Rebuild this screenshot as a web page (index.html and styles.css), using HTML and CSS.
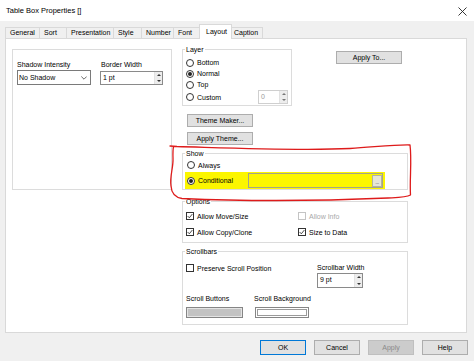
FILE: index.html
```html
<!DOCTYPE html>
<html>
<head>
<meta charset="utf-8">
<link rel="stylesheet" href="styles.css">
</head>
<body>
<div class="titlebar">
  <span class="title">Table Box Properties []</span>
  <svg class="close" width="9" height="9" viewBox="0 0 9 9"><path d="M0.5 0.5 L8.5 8.5 M8.5 0.5 L0.5 8.5" stroke="#222" stroke-width="0.9" fill="none"/></svg>
</div>
<div class="tabstrip">
  <div class="tab t-general">General</div>
  <div class="tab t-sort">Sort</div>
  <div class="tab t-pres">Presentation</div>
  <div class="tab t-style">Style</div>
  <div class="tab t-number">Number</div>
  <div class="tab t-font">Font</div>
  <div class="tab sel">Layout</div>
  <div class="tab t-caption">Caption</div>
</div>
<div class="panel">
  <div class="group shadow-group">
    <div class="shadow-grid">
      <div class="col1">
        <div class="lbl">Shadow Intensity</div>
        <div class="combo"><span>No Shadow</span><svg width="6" height="4" viewBox="0 0 6 4"><path d="M0.3 0.5 L3 3.2 L5.7 0.5" stroke="#444" stroke-width="0.8" fill="none"/></svg></div>
      </div>
      <div class="col2">
        <div class="lbl pad1">Border Width</div>
        <div class="spin spin-border"><span class="spin-val">1 pt</span><div class="spin-btns"><span class="up"></span><span class="dn"></span></div></div>
      </div>
    </div>
  </div>
  <div class="rightcol">
    <div class="row-layer">
      <div class="group layer-group">
        <div class="gtitle">Layer</div>
        <div class="radios">
          <div class="radio-row"><span class="radio"></span>Bottom</div>
          <div class="radio-row"><span class="radio on"></span>Normal</div>
          <div class="radio-row"><span class="radio"></span>Top</div>
          <div class="radio-row custom-row"><span class="rlab"><span class="radio"></span>Custom</span><div class="spin spin-custom disabled"><span class="spin-val">0</span><div class="spin-btns"><span class="up"></span><span class="dn"></span></div></div></div>
        </div>
      </div>
      <div class="btn apply-to">Apply To...</div>
    </div>
    <div class="btn theme-btn">Theme Maker...</div>
    <div class="btn theme-btn theme-btn2">Apply Theme...</div>
    <div class="group wide show-group">
      <div class="gtitle">Show</div>
      <div class="radio-row always-row"><span class="radio"></span>Always</div>
      <div class="cond-row">
        <span class="rlab"><span class="radio on"></span>Conditional</span>
        <div class="cond-field"><span class="ellipsis">...</span></div>
      </div>
    </div>
    <div class="group wide opt-group">
      <div class="gtitle">Options</div>
      <div class="opt-grid">
        <div class="check-row"><span class="check on"><svg width="6" height="6" viewBox="0 0 6 6"><path d="M0.6 3 L2.3 4.8 L5.4 1" stroke="#222" stroke-width="0.8" fill="none"/></svg></span>Allow Move/Size</div>
        <div class="check-row disabled"><span class="check"></span>Allow Info</div>
        <div class="check-row"><span class="check on"><svg width="6" height="6" viewBox="0 0 6 6"><path d="M0.6 3 L2.3 4.8 L5.4 1" stroke="#222" stroke-width="0.8" fill="none"/></svg></span>Allow Copy/Clone</div>
        <div class="check-row"><span class="check on"><svg width="6" height="6" viewBox="0 0 6 6"><path d="M0.6 3 L2.3 4.8 L5.4 1" stroke="#222" stroke-width="0.8" fill="none"/></svg></span>Size to Data</div>
      </div>
    </div>
    <div class="group wide sb-group">
      <div class="gtitle">Scrollbars</div>
      <div class="sb-top">
        <div class="check-row"><span class="check"></span>Preserve Scroll Position</div>
        <div>
          <div class="lbl">Scrollbar Width</div>
          <div class="spin spin-sb"><span class="spin-val">9 pt</span><div class="spin-btns"><span class="up"></span><span class="dn"></span></div></div>
        </div>
      </div>
      <div class="sb-bottom">
        <div>
          <div class="lbl">Scroll Buttons</div>
          <div class="swatch swatch-btn"></div>
        </div>
        <div>
          <div class="lbl">Scroll Background</div>
          <div class="swatch swatch-bg"></div>
        </div>
      </div>
    </div>
  </div>
</div>
<div class="btnbar">
  <div class="btn dlg-btn ok">OK</div>
  <div class="btn dlg-btn">Cancel</div>
  <div class="btn dlg-btn disabled-btn">Apply</div>
  <div class="btn dlg-btn">Help</div>
</div>
<svg class="annot" width="474" height="361" viewBox="0 0 474 361">
  <path d="M170 146 L177 146.5 C230 148 300 151 350 148.5 C380 146.5 398 144.5 410 145 C412 160 409.5 180 410.5 195 C406 197.5 398 197.5 388 198 C330 200.5 250 201.5 182 198.5 C176 197.5 171.5 194 171 186 C169.5 176 173.5 168 173 158 C172.8 152 173 149 173.5 146.5" stroke="#de1b1b" stroke-width="1.3" fill="none" stroke-linecap="round" stroke-linejoin="round"/>
</svg>
</body>
</html>
```
FILE: styles.css
```css
* { box-sizing: border-box; }
html, body { margin: 0; padding: 0; }
body {
  width: 474px;
  height: 361px;
  overflow: hidden;
  background: #f0f0f0;
  font-family: "Liberation Sans", Arial, sans-serif;
  font-size: 7px;
  color: #000;
  position: relative;
}
.titlebar {
  height: 21px;
  background: #fff;
  display: flex;
  align-items: center;
  justify-content: space-between;
  padding: 0 7px 0 6px;
}
.title { font-size: 7.5px; line-height: 9px; }
.close { display: block; margin-top: 1px; }

.tabstrip {
  height: 17px;
  display: flex;
  align-items: flex-end;
  padding-left: 5px;
}
.tab {
  height: 11px;
  border: 1px solid #d9d9d9;
  border-bottom: none;
  background: #f0f0f0;
  padding-left: 4px;
  line-height: 10px;
  margin-right: -1px;
  white-space: nowrap;
}
.t-general { width: 35px; }
.t-sort { width: 28px; }
.t-pres { width: 48px; }
.t-style { width: 29px; }
.t-number { width: 33px; }
.t-font { width: 29px; }
.t-caption { width: 34px; }
.tab.sel {
  width: 33px;
  height: 15px;
  background: #fff;
  margin-left: -2px;
  margin-right: -3px;
  margin-bottom: -1px;
  padding-left: 6px;
  line-height: 13px;
  position: relative;
  z-index: 1;
}

.panel {
  margin-left: 5px;
  width: 462px;
  height: 295px;
  background: #fff;
  border: 1px solid #d9d9d9;
  display: flex;
  align-items: flex-start;
  padding: 10px 0 0 6px;
}
.group { border: 1px solid #dcdcdc; background: #fff; }
.gtitle {
  margin: -5px 0 0 -1px;
  padding: 0 1px;
  background: #fff;
  line-height: 9px;
  height: 9px;
  width: max-content;
}
.lbl { line-height: 9px; height: 9px; white-space: nowrap; }
.pad1 { padding-left: 1px; }

.shadow-group { width: 160px; height: 141px; padding: 10px 0 0 4px; }
.shadow-grid { display: flex; }
.col1 { width: 83px; }
.combo {
  margin-top: 1px;
  width: 74px;
  height: 15px;
  border: 1px solid #7a7a7a;
  display: flex;
  align-items: center;
  justify-content: space-between;
  padding: 0 3px 0 1px;
  line-height: 9px;
}
.combo svg { display: block; margin-top: 1px; }

.spin {
  border: 1px solid #8a8a8a;
  display: flex;
  justify-content: space-between;
  background: #fff;
}
.spin-val { padding: 1px 0 0 2px; line-height: 9px; }
.spin-btns {
  width: 8px;
  background: #ededed;
  border-left: 1px solid #e2e2e2;
  display: flex;
  flex-direction: column;
  align-items: center;
  justify-content: space-around;
}
.up, .dn {
  width: 0;
  height: 0;
  border-left: 2px solid transparent;
  border-right: 2px solid transparent;
}
.up { border-bottom: 2px solid #333; }
.dn { border-top: 2px solid #333; }
.spin-border { width: 63px; height: 14px; margin-top: 2px; }
.spin-custom { width: 30px; height: 14px; }
.spin.disabled { border-color: #cfcfcf; color: #9a9a9a; }
.spin.disabled .up { border-bottom-color: #777; }
.spin.disabled .dn { border-top-color: #777; }
.spin-sb { width: 46px; height: 15px; margin-top: 1px; }

.rightcol {
  margin-left: 10px;
  display: flex;
  flex-direction: column;
  align-items: flex-start;
}
.row-layer { display: flex; align-items: flex-start; }
.layer-group { width: 110px; height: 57px; padding: 0 3px; }
.radios { padding-top: 3px; }
.radio-row { height: 11px; display: flex; align-items: center; white-space: nowrap; }
.rlab { display: flex; align-items: center; white-space: nowrap; }
.custom-row { height: 14px; justify-content: space-between; }
.radio {
  width: 8px;
  height: 8px;
  border: 1px solid #333;
  border-radius: 50%;
  background: #fff;
  margin-right: 3px;
  display: flex;
  align-items: center;
  justify-content: center;
  flex: none;
}
.radio.on::after {
  content: "";
  width: 4px;
  height: 4px;
  border-radius: 50%;
  background: #222;
}

.btn {
  height: 13px;
  border: 1px solid #adadad;
  background: #e1e1e1;
  display: flex;
  align-items: center;
  justify-content: center;
  line-height: 9px;
  white-space: nowrap;
}
.apply-to { width: 66px; margin: 2px 0 0 44px; }
.theme-btn { width: 66px; margin: 8px 0 0 5px; }
.theme-btn2 { margin-top: 5px; }

.wide { width: 226px; padding: 0 3px; }
.show-group { height: 37px; margin-top: 8px; }
.always-row { height: 10px; margin-top: 2px; padding-left: 1px; }
.cond-row {
  height: 17px;
  margin-top: 2px;
  margin-left: -1px;
  width: 200px;
  background: #fcf600;
  display: flex;
  align-items: center;
  padding: 0 2px;
}
.cond-field {
  margin-left: auto;
  width: 135px;
  height: 15px;
  border: 1px solid #a4a48a;
  background: #fcf600;
  display: flex;
  justify-content: flex-end;
  padding: 1px 0 1px 1px;
}
.ellipsis {
  width: 10px;
  height: 12px;
  border: 1px solid #b4b4a0;
  background: #e6e6d8;
  font-size: 6px;
  line-height: 12px;
  text-align: center;
  color: #555;
  letter-spacing: -0.5px;
}

.opt-group { height: 42px; margin-top: 11px; }
.opt-grid {
  display: grid;
  grid-template-columns: 112px auto;
  row-gap: 6px;
  margin-top: 5px;
}
.check-row { height: 10px; display: flex; align-items: center; white-space: nowrap; }
.check {
  width: 8px;
  height: 8px;
  border: 1px solid #333;
  background: #fff;
  margin-right: 3px;
  display: flex;
  align-items: center;
  justify-content: center;
  flex: none;
}
.check svg { display: block; }
.check-row.disabled { color: #a8a8a8; }
.check-row.disabled .check { border-color: #c4c4c4; }

.sb-group { height: 74px; margin-top: 8px; }
.sb-top {
  display: grid;
  grid-template-columns: 131px auto;
  margin-top: 7px;
}
.sb-bottom {
  display: grid;
  grid-template-columns: 68px auto;
  margin-top: 6px;
}
.swatch { height: 11px; margin-top: 4px; border: 1px solid #858585; }
.swatch-btn { width: 57px; background: #c3c3c3; box-shadow: inset 0 0 0 1px #e4e4e4; }
.swatch-bg { width: 54px; margin-left: 1px; background: #fff; box-shadow: inset 0 0 0 1px #fff, inset 0 0 0 2px #9a9a9a; }

.btnbar {
  display: flex;
  justify-content: flex-end;
  gap: 8px;
  padding: 7px 6px 0 0;
}
.dlg-btn { width: 46px; height: 15px; }
.ok { border-color: #0078d7; }
.disabled-btn { background: #cccccc; border-color: #bfbfbf; color: #8a8a8a; }

.annot { position: absolute; left: 0; top: 0; pointer-events: none; }
```
